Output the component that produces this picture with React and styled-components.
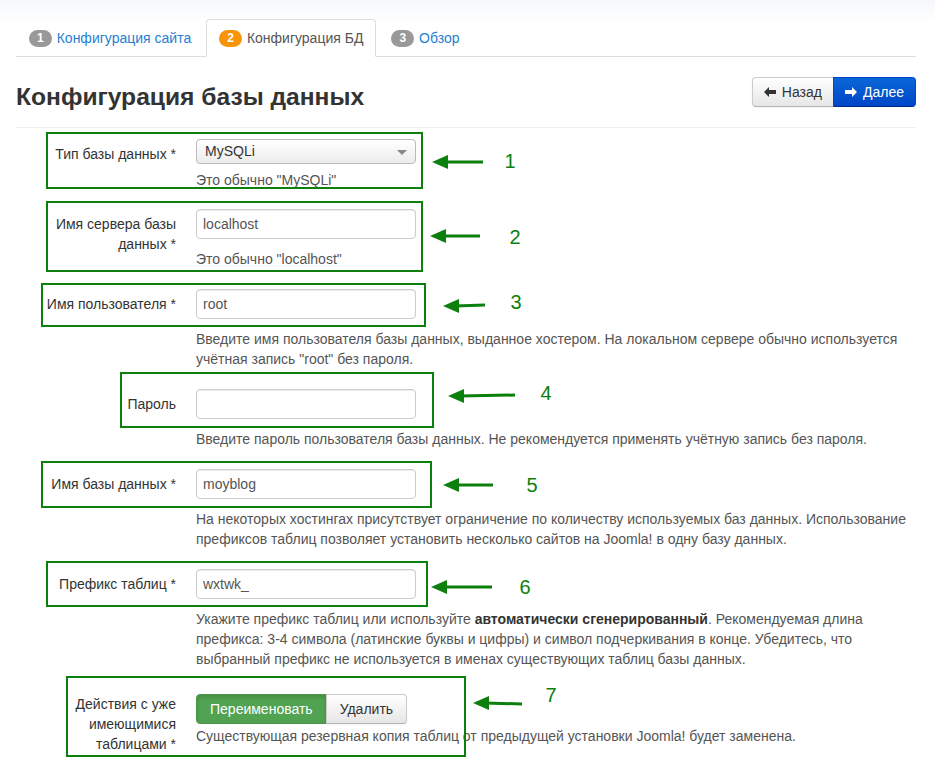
import React from "react";
import styled, { createGlobalStyle } from "styled-components";

const GlobalStyle = createGlobalStyle`
  html, body {
    margin: 0;
    padding: 0;
  }
  body {
    background: linear-gradient(#f5f8fb 0, #fff 24px) no-repeat #fff;
    font-family: "Liberation Sans", Arial, sans-serif;
    font-size: 14px;
    line-height: 20px;
    color: #333;
  }
  * {
    box-sizing: border-box;
  }
`;

const Page = styled.div`
  position: relative;
  width: 935px;
  min-height: 769px;
  padding: 19px 19px 0 16px;
`;

const Tabs = styled.ul`
  display: flex;
  margin: 0;
  padding: 0;
  list-style: none;
  border-bottom: 1px solid #ddd;
`;

const Tab = styled.li`
  margin: 0 2px -1px 0;
  display: flex;
  align-items: center;
  gap: 5px;
  padding: 8px 12px;
  line-height: 20px;
  border: 1px solid ${p => (p.$active ? "#ddd" : "transparent")};
  border-bottom-color: ${p => (p.$active ? "#fff" : "transparent")};
  border-radius: 4px 4px 0 0;
  background: ${p => (p.$active ? "#fff" : "transparent")};
  color: ${p => (p.$active ? "#555" : "#1f7fd3")};
  cursor: pointer;
`;

const Badge = styled.span`
  display: inline-block;
  height: 17px;
  line-height: 17px;
  padding: 0 8px;
  border-radius: 9px;
  font-size: 12px;
  font-weight: bold;
  color: #fff;
  background: ${p => p.$color};
`;

const PageHeader = styled.div`
  display: flex;
  justify-content: space-between;
  align-items: flex-start;
  margin-top: 20px;
  padding-bottom: 10px;
  border-bottom: 1px solid #eee;
`;

const Title = styled.h2`
  margin: 0;
  font-size: 24.6px;
  line-height: 40px;
  font-weight: bold;
  color: #333;
`;

const BtnGroup = styled.div`
  display: flex;
`;

const Btn = styled.button`
  display: flex;
  align-items: center;
  gap: 6px;
  height: ${p => p.$h || 30}px;
  padding: 0 ${p => p.$px || 11}px;
  font-family: inherit;
  font-size: 14px;
  border: 1px solid;
  margin: 0;
  cursor: pointer;
  &:first-child {
    border-radius: 4px 0 0 4px;
  }
  &:last-child {
    border-radius: 0 4px 4px 0;
    margin-left: -1px;
  }
  ${p =>
    p.$variant === "primary"
      ? `
    color: #fff;
    background: linear-gradient(#0a67d8, #0046c6);
    border-color: #0044cc #0044cc #002a80;
  `
      : p.$variant === "success"
      ? `
    color: #fff;
    background: #51a351;
    border-color: #4a964a;
    box-shadow: inset 0 2px 4px rgba(0, 0, 0, 0.15);
  `
      : `
    color: #333;
    background: linear-gradient(#fff, #e6e6e6);
    border-color: #ccc #ccc #b3b3b3;
    box-shadow: 0 1px 2px rgba(0, 0, 0, 0.05);
  `};
`;

const ArrowIcon = ({ dir, color }) => (
  <svg width="12" height="10" viewBox="0 0 12 10">
    <polygon
      points="0,5 5,0 5,3 12,3 12,7 5,7 5,10"
      fill={color}
      transform={dir === "right" ? "translate(12,0) scale(-1,1)" : undefined}
    />
  </svg>
);

const Form = styled.div`
  margin-top: 11px;
`;

const Group = styled.div`
  display: flex;
  margin-top: ${p => (p.$mt === undefined ? 20 : p.$mt)}px;
`;

const Label = styled.div`
  width: 160px;
  flex-shrink: 0;
  text-align: right;
  padding-top: ${p => (p.$pt === undefined ? 5 : p.$pt)}px;
  color: #333;
`;

const Controls = styled.div`
  margin-left: 20px;
  width: 720px;
`;

const Input = styled.input`
  display: block;
  width: 220px;
  height: 30px;
  margin: 0;
  padding: 4px 6px;
  font-family: inherit;
  font-size: 14px;
  color: #555;
  background: #fff;
  border: 1px solid #ccc;
  border-radius: 4px;
  box-shadow: inset 0 1px 1px rgba(0, 0, 0, 0.075);
  outline: none;
`;

const Select = styled.div`
  position: relative;
  width: 220px;
  height: 25px;
  line-height: 23px;
  padding: 0 8px;
  color: #333;
  border: 1px solid #bbb;
  border-radius: 4px;
  background: linear-gradient(#fff, #ececec);
  &::after {
    content: "";
    position: absolute;
    right: 8px;
    top: 10px;
    border-left: 5px solid transparent;
    border-right: 5px solid transparent;
    border-top: 5px solid #888;
  }
`;

const Help = styled.div`
  margin-top: ${p => (p.$mt === undefined ? 10 : p.$mt)}px;
  color: #555;
  b {
    color: #333;
  }
`;

/* annotations drawn over the form */
const green = "#0d7f0d";

const Box = styled.div`
  position: absolute;
  left: ${p => p.$x}px;
  top: ${p => p.$y}px;
  width: ${p => p.$w}px;
  height: ${p => p.$h}px;
  border: 2px solid ${green};
  pointer-events: none;
`;

const ArrowSvg = styled.svg`
  position: absolute;
  left: ${p => p.$x}px;
  top: ${p => p.$y - 10}px;
  overflow: visible;
  pointer-events: none;
`;

const Num = styled.div`
  position: absolute;
  left: ${p => p.$x}px;
  top: ${p => p.$y}px;
  transform: translate(-50%, -50%);
  font-size: 20px;
  line-height: 20px;
  color: ${green};
`;

const Arrow = ({ tip, tail, y, tailY }) => {
  const w = tail - tip;
  const dy = (tailY === undefined ? y : tailY) - y;
  return (
    <ArrowSvg $x={tip} $y={y} width={w} height="20">
      <line x1="12" y1="10" x2={w} y2={10 + dy} stroke={green} strokeWidth="3" />
      <polygon points="0,10 16,3 16,17" fill={green} />
    </ArrowSvg>
  );
};

const marks = [
  { box: [46, 132, 377, 57], arrow: [432, 483, 162], num: [510, 161] },
  { box: [46, 201, 377, 71], arrow: [430, 480, 236], num: [515, 237] },
  { box: [41, 283, 385, 44], arrow: [443, 485, 306, 305], num: [516, 302] },
  { box: [120, 372, 314, 56], arrow: [448, 515, 396, 395], num: [546, 393] },
  { box: [41, 461, 391, 47], arrow: [443, 493, 485], num: [532, 485] },
  { box: [46, 561, 382, 46], arrow: [431, 492, 587], num: [525, 587] },
  { box: [66, 676, 400, 81], arrow: [473, 522, 703, 704], num: [551, 695] }
];

export default function App() {
  return (
    <Page>
      <GlobalStyle />
      <Tabs>
        <Tab>
          <Badge $color="#999">1</Badge>
          Конфигурация сайта
        </Tab>
        <Tab $active>
          <Badge $color="#f89406">2</Badge>
          Конфигурация БД
        </Tab>
        <Tab>
          <Badge $color="#999">3</Badge>
          Обзор
        </Tab>
      </Tabs>

      <PageHeader>
        <Title>Конфигурация базы данных</Title>
        <BtnGroup>
          <Btn>
            <ArrowIcon dir="left" color="#333" />
            Назад
          </Btn>
          <Btn $variant="primary">
            <ArrowIcon dir="right" color="#fff" />
            Далее
          </Btn>
        </BtnGroup>
      </PageHeader>

      <Form>
        <Group $mt={0}>
          <Label>Тип базы данных *</Label>
          <Controls>
            <Select>MySQLi</Select>
            <Help $mt={6}>Это обычно "MySQLi"</Help>
          </Controls>
        </Group>

        <Group $mt={19}>
          <Label>
            Имя сервера базы
            <br />
            данных *
          </Label>
          <Controls>
            <Input defaultValue="localhost" />
            <Help>Это обычно "localhost"</Help>
          </Controls>
        </Group>

        <Group>
          <Label>Имя пользователя *</Label>
          <Controls>
            <Input defaultValue="root" />
            <Help>
              Введите имя пользователя базы данных, выданное хостером. На локальном
              сервере обычно используется учётная запись "root" без пароля.
            </Help>
          </Controls>
        </Group>

        <Group>
          <Label>Пароль</Label>
          <Controls>
            <Input type="password" defaultValue="" />
            <Help>
              Введите пароль пользователя базы данных. Не рекомендуется применять
              учётную запись без пароля.
            </Help>
          </Controls>
        </Group>

        <Group>
          <Label>Имя базы данных *</Label>
          <Controls>
            <Input defaultValue="moyblog" />
            <Help>
              На некоторых хостингах присутствует ограничение по количеству
              используемых баз данных. Использование префиксов таблиц позволяет
              установить несколько сайтов на Joomla! в одну базу данных.
            </Help>
          </Controls>
        </Group>

        <Group>
          <Label>Префикс таблиц *</Label>
          <Controls>
            <Input defaultValue="wxtwk_" />
            <Help>
              Укажите префикс таблиц или используйте <b>автоматически сгенерированный</b>.
              Рекомендуемая длина префикса: 3-4 символа (латинские буквы и цифры) и
              символ подчеркивания в конце. Убедитесь, что выбранный префикс не
              используется в именах существующих таблиц базы данных.
            </Help>
          </Controls>
        </Group>

        <Group $mt={25}>
          <Label $pt={0}>
            Действия с уже
            <br />
            имеющимися
            <br />
            таблицами *
          </Label>
          <Controls>
            <BtnGroup>
              <Btn $variant="success" $px={13}>Переименовать</Btn>
              <Btn $px={13}>Удалить</Btn>
            </BtnGroup>
            <Help $mt={2}>
              Существующая резервная копия таблиц от предыдущей установки Joomla!
              будет заменена.
            </Help>
          </Controls>
        </Group>
      </Form>

      {marks.map((m, i) => (
        <React.Fragment key={i}>
          <Box $x={m.box[0]} $y={m.box[1]} $w={m.box[2]} $h={m.box[3]} />
          <Arrow tip={m.arrow[0]} tail={m.arrow[1]} y={m.arrow[2]} tailY={m.arrow[3]} />
          <Num $x={m.num[0]} $y={m.num[1]}>
            {i + 1}
          </Num>
        </React.Fragment>
      ))}
    </Page>
  );
}
